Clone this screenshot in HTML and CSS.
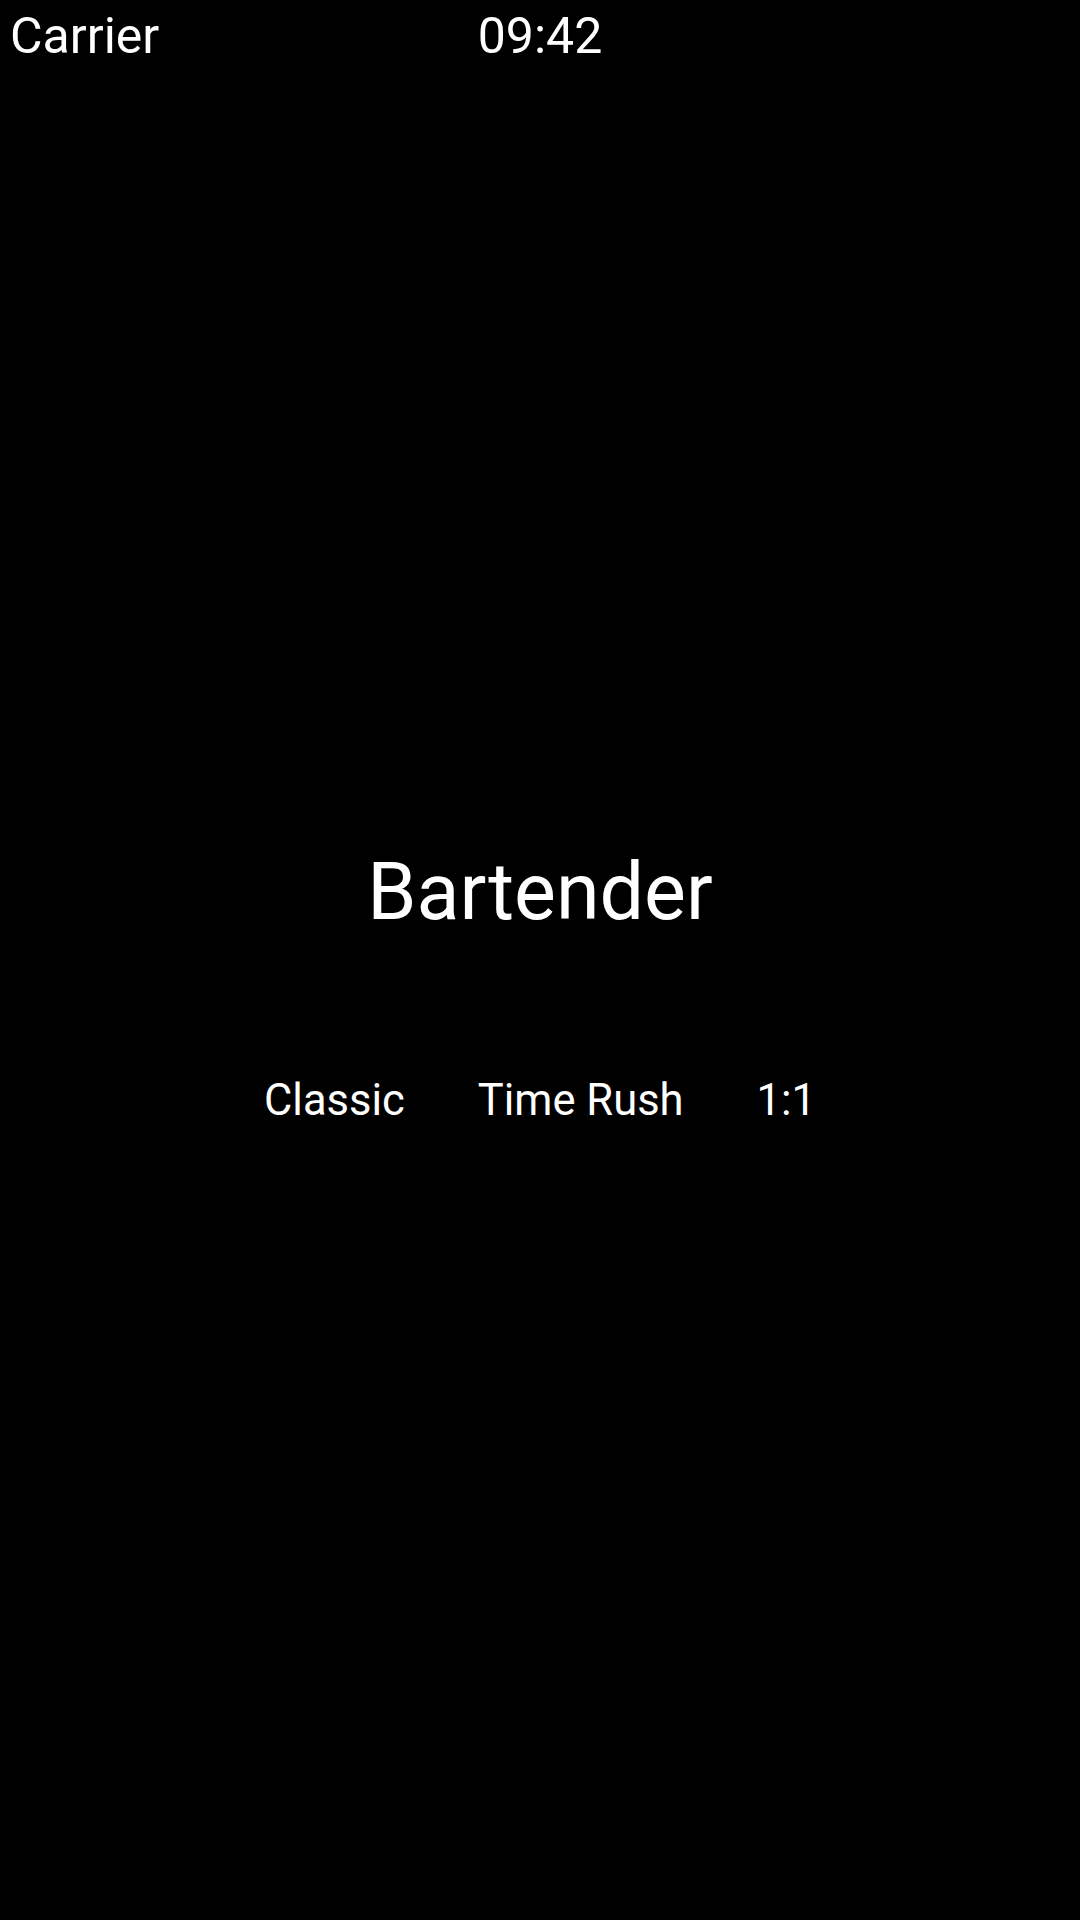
FILE: index.html
```html
<!DOCTYPE html>
<html lang="en">
<head>
  <meta charset="UTF-8" />
  <meta name="viewport" content="width=device-width, initial-scale=1.0"/>
  <title>Bartender</title>
  <link rel="stylesheet" href="styles.css">
</head>
<body>
  <div class="status-bar">
    <span class="carrier">Carrier</span>
    <span class="clock">09:42</span>
  </div>

  <div class="menu">
    <h1 class="title">Bartender</h1>
    <div class="modes">
      <button class="mode">Classic</button>
      <button class="mode">Time Rush</button>
      <button class="mode">1:1</button>
    </div>
  </div>
</body>
</html>
```

FILE: styles.css
```css
body {
  margin: 0;
  background: #000;
  color: #fff;
  font-family: Roboto, "Noto Sans", sans-serif;
  width: 1080px;
  height: 1920px;
  overflow: hidden;
}

.status-bar {
  position: relative;
  height: 72px;
  display: flex;
  align-items: center;
  padding: 0 10px;
  font-size: 50px;
}

.clock {
  position: absolute;
  left: 0;
  right: 0;
  text-align: center;
}

.menu {
  display: flex;
  flex-direction: column;
  align-items: center;
  padding-top: 770px;
}

.title {
  margin: 0;
  font-size: 79px;
  font-weight: 400;
  line-height: 100px;
}

.modes {
  display: flex;
  gap: 73px;
  margin-top: 129px;
}

.mode {
  background: none;
  border: 0;
  padding: 0;
  color: #fff;
  font-family: inherit;
  font-size: 43.5px;
  line-height: 60px;
}
```
